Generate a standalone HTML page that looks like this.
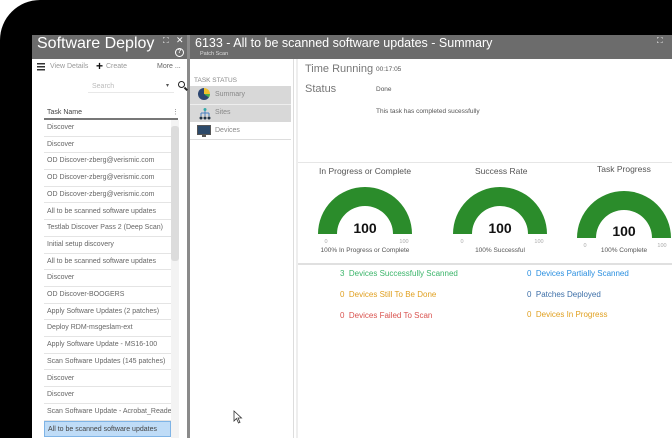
<!DOCTYPE html>
<html><head><style>
*{margin:0;padding:0;box-sizing:border-box}
body{width:672px;height:438px;overflow:hidden;background:#fff;font-family:"Liberation Sans",sans-serif;position:relative}
.abs{position:absolute}
.row{position:absolute;left:44px;width:127px;height:16.7px;border-bottom:1px solid #e4e4e4;font-size:7px;color:#666;padding-left:3px;line-height:15px;white-space:nowrap;overflow:hidden}
.t{position:absolute;font-size:8px;white-space:nowrap}
</style></head><body>
<div class="abs" style="left:0;top:0;width:672px;height:438px;background:#000;border-radius:40px 0 0 0"></div>
<div class="abs" style="left:32px;top:35px;width:640px;height:403px;background:#fff"></div>
<!-- left header -->
<div class="abs" style="left:32px;top:35px;width:155px;height:24px;background:#6c6c6c"></div>
<div class="t" style="left:37px;top:35px;font-size:16px;color:#fff">Software Deploy</div>
<div class="t" style="left:163px;top:36px;font-size:8px;color:#fff">⛶</div>
<div class="t" style="left:176px;top:35px;font-size:9px;color:#fff">✕</div>
<div class="abs" style="left:175px;top:48px;width:9px;height:9px;border:1.3px solid #fff;border-radius:50%;font-size:6px;color:#fff;text-align:center;line-height:6px;font-weight:bold">?</div>
<div class="abs" style="left:187px;top:35px;width:3px;height:403px;background:#8a8a8a"></div>
<!-- toolbar -->
<div class="abs" style="left:37px;top:63px;width:8px;height:8px;background:repeating-linear-gradient(#333 0 1.5px,transparent 1.5px 3px)"></div>
<div class="t" style="left:50px;top:63px;font-size:7px;color:#999">View Details</div>
<div class="t" style="left:96px;top:59px;font-size:12px;color:#111;font-weight:bold">+</div>
<div class="t" style="left:106px;top:63px;font-size:7px;color:#999">Create</div>
<div class="t" style="left:157px;top:63px;font-size:7px;color:#666">More ...</div>
<div class="t" style="left:92px;top:83px;font-size:7px;color:#bbb">Search</div>
<div class="abs" style="left:88px;top:92px;width:86px;height:1px;background:#e8e8e8"></div>
<div class="t" style="left:166px;top:82px;font-size:6px;color:#555">▾</div>
<div class="abs" style="left:178px;top:81px;width:7px;height:7px;border:1.5px solid #222;border-radius:50%"></div>
<div class="abs" style="left:184px;top:88px;width:4px;height:1.6px;background:#222;transform:rotate(45deg)"></div>
<div class="t" style="left:47px;top:109px;font-size:7px;color:#444">Task Name</div>
<div class="t" style="left:172px;top:108px;font-size:7px;color:#888">⋮</div>
<div class="abs" style="left:44px;top:118px;width:134px;height:2px;background:#777"></div>
<div class="abs" style="left:171px;top:120px;width:8px;height:318px;background:#f3f3f3"></div>
<div class="abs" style="left:171px;top:126px;width:8px;height:135px;background:#dcdcdc;border-radius:3px"></div>
<div class="row" style="top:120px">Discover</div>
<div class="row" style="top:136.7px">Discover</div>
<div class="row" style="top:153.4px">OD Discover-zberg@verismic.com</div>
<div class="row" style="top:170.1px">OD Discover-zberg@verismic.com</div>
<div class="row" style="top:186.8px">OD Discover-zberg@verismic.com</div>
<div class="row" style="top:203.5px">All to be scanned software updates</div>
<div class="row" style="top:220.2px">Testlab Discover Pass 2 (Deep Scan)</div>
<div class="row" style="top:236.9px">Initial setup discovery</div>
<div class="row" style="top:253.6px">All to be scanned software updates</div>
<div class="row" style="top:270.3px">Discover</div>
<div class="row" style="top:287px">OD Discover-BOOGERS</div>
<div class="row" style="top:303.7px">Apply Software Updates (2 patches)</div>
<div class="row" style="top:320.4px">Deploy RDM-msgeslam-ext</div>
<div class="row" style="top:337.1px">Apply Software Update - MS16-100</div>
<div class="row" style="top:353.8px">Scan Software Updates (145 patches)</div>
<div class="row" style="top:370.5px">Discover</div>
<div class="row" style="top:387.2px">Discover</div>
<div class="row" style="top:403.9px">Scan Software Update - Acrobat_Reader_</div>
<div class="row" style="top:420.6px;background:#bfdcf7;border:1px solid #7fb4e6;color:#444">All to be scanned software updates</div>
<!-- right header -->
<div class="abs" style="left:190px;top:35px;width:482px;height:24px;background:#6c6c6c"></div>
<div class="t" style="left:195px;top:36px;font-size:12.5px;color:#fff">6133 - All to be scanned software updates - Summary</div>
<div class="t" style="left:200px;top:51px;font-size:5.5px;color:#ddd">Patch Scan</div>
<div class="t" style="left:657px;top:36px;font-size:8px;color:#fff">⛶</div>
<!-- task status nav -->
<div class="abs" style="left:190px;top:59px;width:104px;height:379px;background:#fff;border-right:1px solid #ddd"></div>
<div class="t" style="left:194px;top:77px;font-size:6.5px;color:#888">TASK STATUS</div>
<div class="abs" style="left:190px;top:86px;width:101px;height:18px;background:#d8d8d8"></div>
<div class="abs" style="left:190px;top:104px;width:101px;height:18px;background:#d8d8d8;border-top:1px solid #eee"></div>
<div class="abs" style="left:198px;top:88px;width:12px;height:12px;border-radius:50%;background:conic-gradient(#f3c22c 0 25%,#4caf50 25% 35%,#2d4670 35%)"></div>
<div class="t" style="left:215px;top:91px;font-size:7px;color:#888">Summary</div>
<div class="abs" style="left:199px;top:107px;width:12px;height:12px">
<svg width="12" height="12"><path d="M6 1v4M2 5h8M2 5v3M6 5v3M10 5v3" stroke="#4a7fbf" fill="none"/><circle cx="2" cy="10" r="1.5" fill="#234"/><circle cx="6" cy="10" r="1.5" fill="#234"/><circle cx="10" cy="10" r="1.5" fill="#234"/><circle cx="6" cy="1.5" r="1.5" fill="#3aa"/></svg></div>
<div class="t" style="left:215px;top:109px;font-size:7px;color:#888">Sites</div>
<div class="abs" style="left:197px;top:125px;width:14px;height:10px;background:#2d4a6a;border:1px solid #555"></div>
<div class="abs" style="left:202px;top:135px;width:4px;height:2px;background:#555"></div>
<div class="t" style="left:215px;top:127px;font-size:7px;color:#888">Devices</div>
<div class="abs" style="left:190px;top:139px;width:101px;height:1px;background:#ddd"></div>
<!-- main -->
<div class="abs" style="left:296px;top:59px;width:2px;height:379px;background:#eee"></div>
<div class="t" style="left:305px;top:63px;font-size:11px;color:#777">Time Running</div>
<div class="t" style="left:376px;top:66px;font-size:6.5px;color:#555">00:17:05</div>
<div class="t" style="left:305px;top:83px;font-size:11px;color:#777">Status</div>
<div class="t" style="left:376px;top:86px;font-size:6.5px;color:#555">Done</div>
<div class="t" style="left:376px;top:108px;font-size:6.5px;color:#555">This task has completed sucessfully</div>
<div class="abs" style="left:298px;top:162px;width:374px;height:1px;background:#e6e6e6"></div>
<div class="abs" style="left:298px;top:263px;width:374px;height:1.5px;background:#e0e0e0"></div>
<div class="t" style="left:319px;top:166px;font-size:8.5px;color:#555">In Progress or Complete</div>
<div class="t" style="left:475px;top:166px;font-size:8.5px;color:#555">Success Rate</div>
<div class="t" style="left:597px;top:164px;font-size:8.5px;color:#555">Task Progress</div>
<svg class="abs" style="left:290px;top:150px" width="382" height="120">
<g fill="#2b8c2b">
<path d="M-47 0A47 47 0 0 1 47 0H28A28 28 0 0 0 -28 0Z" transform="translate(75,84)"/>
<path d="M-47 0A47 47 0 0 1 47 0H28A28 28 0 0 0 -28 0Z" transform="translate(210,84)"/>
<path d="M-47 0A47 47 0 0 1 47 0H28A28 28 0 0 0 -28 0Z" transform="translate(334,88)"/>
</g>
<g font-family="Liberation Sans" font-weight="bold" font-size="14" text-anchor="middle" fill="#111">
<text x="75" y="83">100</text><text x="210" y="83">100</text><text x="334" y="86">100</text></g>
<g font-family="Liberation Sans" font-size="5.5" fill="#aaa" text-anchor="middle">
<text x="36" y="93">0</text><text x="114" y="93">100</text><text x="172" y="93">0</text><text x="249" y="93">100</text><text x="295" y="97">0</text><text x="372" y="97">100</text></g>
<g font-family="Liberation Sans" font-size="6.5" fill="#555" text-anchor="middle">
<text x="75" y="102">100% In Progress or Complete</text><text x="210" y="102">100% Successful</text><text x="334" y="102">100% Complete</text></g>
</svg>
<div class="t" style="left:340px;top:269px;font-size:8px;color:#3bb56a">3&nbsp; Devices Successfully Scanned</div>
<div class="t" style="left:340px;top:290px;font-size:8px;color:#e0a020">0&nbsp; Devices Still To Be Done</div>
<div class="t" style="left:340px;top:311px;font-size:8px;color:#d9534f">0&nbsp; Devices Failed To Scan</div>
<div class="t" style="left:527px;top:269px;font-size:8px;color:#2a8fe0">0&nbsp; Devices Partially Scanned</div>
<div class="t" style="left:527px;top:290px;font-size:8px;color:#3d6fa8">0&nbsp; Patches Deployed</div>
<div class="t" style="left:527px;top:310px;font-size:8px;color:#e0a020">0&nbsp; Devices In Progress</div>
<svg class="abs" style="left:233px;top:410px" width="10" height="14"><path d="M1 1V11L3.5 8.5L5.5 13L7 12.3L5 8H8.5Z" fill="#fff" stroke="#333" stroke-width="0.8"/></svg>
</body></html>
